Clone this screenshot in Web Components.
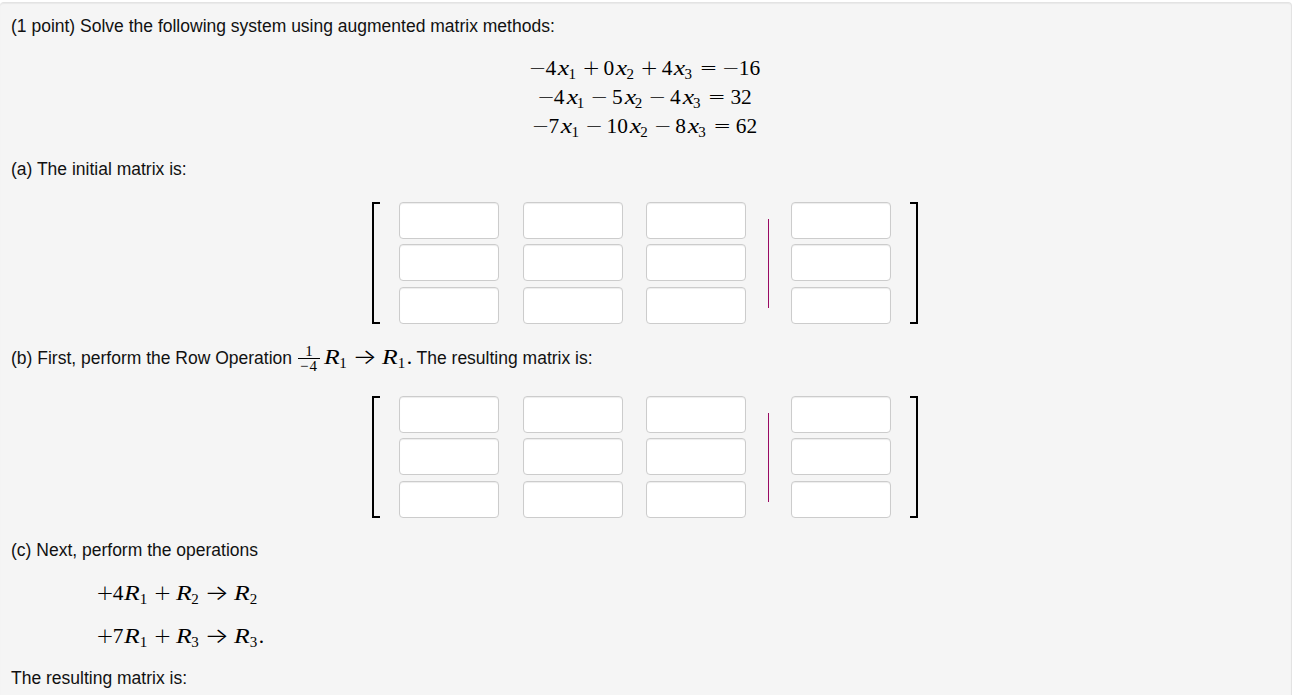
<!DOCTYPE html>
<html>
<head>
<meta charset="utf-8">
<title>Augmented matrix</title>
<style>
  html, body { margin: 0; background: #fff; height: 695px; overflow: hidden; }
  body { font: 17.5px/24px "Liberation Sans", Arial, sans-serif; color: #111; }
</style>
</head>
<body>
<problem-card>
  <prob-text top="11">(1 point) Solve the following system using augmented matrix methods:</prob-text>
  <math-line top="15" height="30" align="center"><m-op kind="pre">−</m-op>4<m-var n="x" s="1"></m-var><m-op>+</m-op>0<m-var n="x" s="2"></m-var><m-op>+</m-op>4<m-var n="x" s="3"></m-var><m-op kind="rel">=</m-op><m-op kind="pre">−</m-op>16</math-line>
  <math-line height="29" align="center"><m-op kind="pre">−</m-op>4<m-var n="x" s="1"></m-var><m-op>−</m-op>5<m-var n="x" s="2"></m-var><m-op>−</m-op>4<m-var n="x" s="3"></m-var><m-op kind="rel">=</m-op>32</math-line>
  <math-line height="29" align="center"><m-op kind="pre">−</m-op>7<m-var n="x" s="1"></m-var><m-op>−</m-op>10<m-var n="x" s="2"></m-var><m-op>−</m-op>8<m-var n="x" s="3"></m-var><m-op kind="rel">=</m-op>62</math-line>
  <prob-text top="16">(a) The initial matrix is:</prob-text>
  <aug-matrix top="21"></aug-matrix>
  <prob-text top="22">(b) First, perform the Row Operation <m-frac top="1" bottom="−4"></m-frac><m-var n="R" s="1"></m-var><m-op kind="arrow">→</m-op><m-var n="R" s="1"></m-var><m-dot></m-dot> The resulting matrix is:</prob-text>
  <aug-matrix top="26"></aug-matrix>
  <prob-text top="20">(c) Next, perform the operations</prob-text>
  <math-line top="9" height="44" indent="85"><m-op kind="pre">+</m-op>4<m-var n="R" s="1"></m-var><m-op>+</m-op><m-var n="R" s="2"></m-var><m-op kind="arrow">→</m-op><m-var n="R" s="2"></m-var></math-line>
  <math-line height="42" indent="85"><m-op kind="pre">+</m-op>7<m-var n="R" s="1"></m-var><m-op>+</m-op><m-var n="R" s="3"></m-var><m-op kind="arrow">→</m-op><m-var n="R" s="3"></m-var><m-dot></m-dot></math-line>
  <prob-text top="9">The resulting matrix is:</prob-text>
</problem-card>

<script>
const MATH_FONT = '"Liberation Serif", "Times New Roman", serif';
const OP_FONT = '"DejaVu Sans Light", "DejaVu Sans", sans-serif';

class ProblemCard extends HTMLElement {
  constructor() {
    super();
    this.attachShadow({ mode: 'open' }).innerHTML = `
      <style>
        :host {
          display: block;
          box-sizing: border-box;
          width: 1292px;
          height: 693px;
          margin-top: 2px;
          padding: 0 13px 0 11px;
          background: #f5f5f5;
          border: 1px solid #e3e3e3;
          border-left: 0;
          border-bottom: 0;
          border-radius: 4px 4px 0 0;
          box-shadow: inset 0 1px 1px rgba(0,0,0,.05);
        }
      </style>
      <slot></slot>`;
  }
}

class ProbText extends HTMLElement {
  constructor() {
    super();
    this.attachShadow({ mode: 'open' }).innerHTML = `
      <style>
        :host { display: block; white-space: nowrap; line-height: 24px; height: 24px; }
      </style>
      <slot></slot>`;
  }
  connectedCallback() {
    this.style.marginTop = (this.getAttribute('top') || 0) + 'px';
  }
}

class MathLine extends HTMLElement {
  constructor() {
    super();
    this.attachShadow({ mode: 'open' }).innerHTML = `
      <style>
        :host {
          display: block;
          white-space: nowrap;
          font-family: ${MATH_FONT};
          font-size: 21.4px;
          color: #000;
        }
      </style>
      <slot></slot>`;
  }
  connectedCallback() {
    const h = this.getAttribute('height') || 30;
    this.style.lineHeight = h + 'px';
    this.style.height = h + 'px';
    this.style.marginTop = (this.getAttribute('top') || 0) + 'px';
    this.style.paddingLeft = (this.getAttribute('indent') || 0) + 'px';
    this.style.textAlign = this.getAttribute('align') || 'left';
  }
}

class MVar extends HTMLElement {
  constructor() {
    super();
    this.attachShadow({ mode: 'open' });
  }
  connectedCallback() {
    const n = this.getAttribute('n');
    const isR = n === 'R';
    this.shadowRoot.innerHTML = `<style>
        :host { display: inline; font: 21.4px/1 ${MATH_FONT}; color: #000; }
        i {
          display: inline-block;
          width: ${isR ? '.72em' : '.572em'};
          margin-left: ${isR ? '1px' : '0'};
          font-style: italic;
          transform-origin: left;
          transform: scaleX(1.2);
        }
        sub { font-size: 15px; line-height: 0; vertical-align: -4px; margin-right: 1.5px; }
      </style><i>${n}</i><sub>${this.getAttribute('s')}</sub>`;
  }
}

class MOp extends HTMLElement {
  constructor() {
    super();
    this.attachShadow({ mode: 'open' }).innerHTML = `
      <style>
        :host {
          display: inline-block;
          width: .778em;
          margin: 0 .222em;
          text-align: center;
          font-family: ${OP_FONT};
          font-size: 21.4px;
          line-height: 1;
          color: #000;
        }
        :host([kind="pre"]) { margin: 0; }
        :host([kind="rel"]) { margin: 0 .278em; }
        :host([kind="arrow"]) {
          width: 1em;
          margin: 0 .26em 0 .28em;
          font-family: Inter, "DejaVu Sans", sans-serif;
          font-weight: 300;
          transform: scaleX(1.2);
        }
      </style>
      <slot></slot>`;
  }
}

class MDot extends HTMLElement {
  constructor() {
    super();
    this.attachShadow({ mode: 'open' }).innerHTML = `<style>
        :host { display: inline; font: 21.4px/1 ${MATH_FONT}; color: #000; }
      </style>.`;
  }
}

class MFrac extends HTMLElement {
  constructor() {
    super();
    this.attachShadow({ mode: 'open' });
  }
  connectedCallback() {
    this.shadowRoot.innerHTML = `<style>
        :host {
          display: inline-flex;
          flex-direction: column;
          align-items: center;
          vertical-align: 8px;
          margin: -8px 3px -8px 1px;
          font: 15px/12px ${MATH_FONT};
          color: #000;
        }
        .t { border-bottom: 1px solid #000; align-self: stretch; text-align: center; padding-bottom: 1px; }
        .b { padding: 1px 2px 0; letter-spacing: 1px; }
      </style><span class="t">${this.getAttribute('top')}</span><span class="b">${this.getAttribute('bottom')}</span>`;
  }
}

class AnsCell extends HTMLElement {
  constructor() {
    super();
    this.attachShadow({ mode: 'open' }).innerHTML = `
      <style>
        :host { display: block; }
        input {
          display: block;
          box-sizing: border-box;
          width: 100px;
          height: 37px;
          padding: 4px 6px;
          background: #fff;
          border: 1px solid #ccc;
          border-radius: 4px;
          box-shadow: inset 0 1px 1px rgba(0,0,0,.075);
          outline: none;
        }
      </style>
      <input type="text">`;
  }
}

class AugMatrix extends HTMLElement {
  constructor() {
    super();
    this.attachShadow({ mode: 'open' });
  }
  connectedCallback() {
    let cells = '';
    for (const r of [1, 3, 5]) {
      for (const c of [1, 3, 5, 7]) {
        cells += `<ans-cell style="grid-row:${r};grid-column:${c}"></ans-cell>`;
      }
    }
    this.shadowRoot.innerHTML = `
      <style>
        :host { display: flex; justify-content: center; }
        .wrap { display: flex; align-items: stretch; }
        .br { width: 6px; border: solid #000; border-width: 2px 0; }
        .br.l { border-left-width: 2px; margin-right: 19px; }
        .br.r { border-right-width: 2px; margin-left: 19px; }
        .grid {
          display: grid;
          grid-template-columns: 100px 24px 100px 23px 100px 45px 100px;
          grid-template-rows: 37px 5px 37px 6px 37px;
        }
        .sep {
          grid-column: 6;
          grid-row: 1 / 6;
          justify-self: center;
          align-self: center;
          width: 1px;
          height: 89px;
          background: #990a63;
        }
      </style>
      <div class="wrap">
        <div class="br l"></div>
        <div class="grid">${cells}<div class="sep"></div></div>
        <div class="br r"></div>
      </div>`;
    this.style.marginTop = (this.getAttribute('top') || 0) + 'px';
  }
}

customElements.define('problem-card', ProblemCard);
customElements.define('prob-text', ProbText);
customElements.define('math-line', MathLine);
customElements.define('m-var', MVar);
customElements.define('m-op', MOp);
customElements.define('m-dot', MDot);
customElements.define('m-frac', MFrac);
customElements.define('ans-cell', AnsCell);
customElements.define('aug-matrix', AugMatrix);
</script>
</body>
</html>
